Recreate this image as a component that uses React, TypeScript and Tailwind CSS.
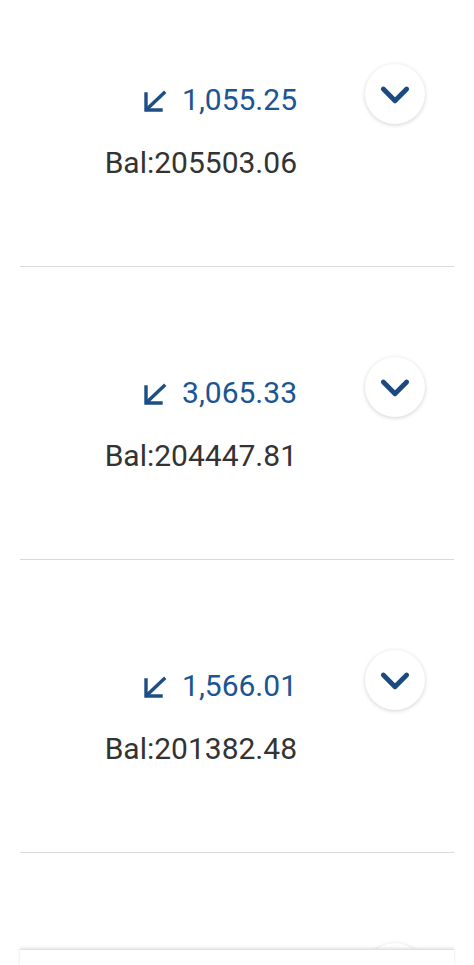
import React from 'react';

const rows = [
  { amount: '1,055.25', bal: '205503.06' },
  { amount: '3,065.33', bal: '204447.81' },
  { amount: '1,566.01', bal: '201382.48' },
];

function DebitArrow() {
  return (
    <svg width="26" height="24" viewBox="0 0 26 24" fill="none" stroke="#1d4f86" strokeWidth="3.4" strokeLinecap="square">
      <path d="M4 5V21H19" />
      <path d="M5 20L22 4" />
    </svg>
  );
}

function ExpandButton() {
  return (
    <div className="w-[60px] h-[60px] rounded-full bg-white shadow-[0_1px_4px_rgba(0,0,0,0.18)] flex items-center justify-center">
      <svg width="40" height="40" viewBox="0 0 24 24" fill="none" stroke="#1b4a80" strokeWidth="2.9" strokeLinecap="round" strokeLinejoin="round">
        <path d="M5 9l7 7 7-7" />
      </svg>
    </div>
  );
}

export default function App() {
  return (
    <div className="relative h-[965px] overflow-hidden bg-white font-['Roboto',sans-serif]">
      <div className="-mt-[26px] px-5">
        {rows.map((r, i) => (
          <div key={i} className="h-[293px] border-b border-[#d9d9d9] flex items-start">
            <div className="w-[277px] pt-[108px] flex flex-col items-end">
              <div className="flex items-center h-9 text-[30px] leading-9 text-[#1b5592]">
                <span className="mr-[14px] mt-[2px]"><DebitArrow /></span>
                {r.amount}
              </div>
              <div className="mt-[27px] h-9 text-[30px] leading-9 text-[#333333]">Bal:{r.bal}</div>
            </div>
            <div className="ml-[68px] mt-[90px]">
              <ExpandButton />
            </div>
          </div>
        ))}
        <div className="flex items-start">
          <div className="w-[277px]" />
          <div className="ml-[68px] mt-[90px]">
            <ExpandButton />
          </div>
        </div>
      </div>
      <div className="absolute left-5 right-5 top-[949px] bottom-0 bg-white border-t border-[#e2e2e2] shadow-[0_-1px_3px_rgba(0,0,0,0.12)]" />
    </div>
  );
}
